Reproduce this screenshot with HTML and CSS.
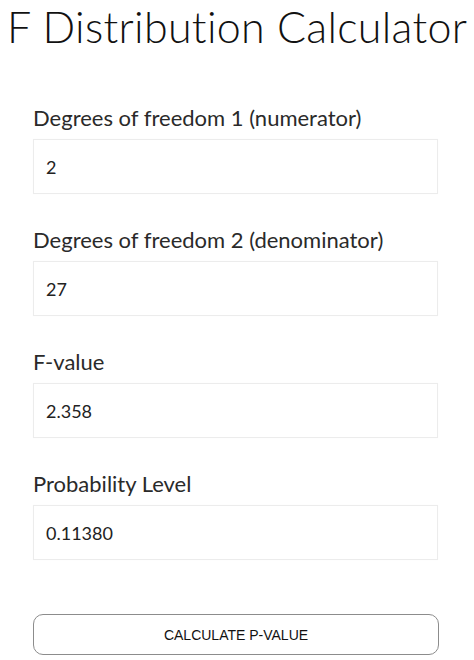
FILE: index.html
```html
<!DOCTYPE html>
<html lang="en">
<head>
<meta charset="utf-8">
<title>F Distribution Calculator</title>
<link rel="stylesheet" href="styles.css">
</head>
<body>
<h1 class="title">F Distribution Calculator</h1>
<form class="calc">
  <div class="field">
    <label class="label" for="df1">Degrees of freedom 1 (numerator)</label>
    <input class="input" id="df1" type="text" value="2">
  </div>
  <div class="field">
    <label class="label" for="df2">Degrees of freedom 2 (denominator)</label>
    <input class="input" id="df2" type="text" value="27">
  </div>
  <div class="field">
    <label class="label" for="fval">F-value</label>
    <input class="input" id="fval" type="text" value="2.358">
  </div>
  <div class="field">
    <label class="label" for="prob">Probability Level</label>
    <input class="input" id="prob" type="text" value="0.11380">
  </div>
  <button class="btn" type="button">CALCULATE P-VALUE</button>
</form>
</body>
</html>
```
FILE: styles.css
```css
html, body {
  margin: 0;
  padding: 0;
  background: #fff;
}
body {
  font-family: Lato, "Open Sans", sans-serif;
  color: #1a1a1a;
  width: 474px;
}
.title {
  margin: 0;
  padding: 1px 0 0 7px;
  height: 51px;
  font-size: 43px;
  line-height: 51px;
  letter-spacing: 0.3px;
  font-weight: 300;
  color: #111;
  white-space: nowrap;
}
.calc {
  display: flex;
  flex-direction: column;
  padding: 52px 36px 0 33px;
}
.field {
  display: flex;
  flex-direction: column;
  margin-bottom: 32px;
}
.label {
  font-size: 22px;
  line-height: 28px;
  color: #2a2a2a;
  margin-bottom: 7px;
}
.input {
  box-sizing: border-box;
  height: 55px;
  width: 405px;
  border: 1px solid #ececec;
  box-shadow: 0 0 1px rgba(0,0,0,0.04);
  padding: 0 12px;
  font-family: Lato, "Open Sans", sans-serif;
  font-size: 18px;
  color: #222;
  background: #fff;
  outline: none;
}
.btn {
  box-sizing: border-box;
  margin-top: 22px;
  width: 406px;
  height: 41px;
  border: 1px solid #8c8c8c;
  border-radius: 10px;
  background: #fff;
  font-family: "Liberation Sans", Arial, sans-serif;
  font-size: 14px;
  color: #111;
  cursor: pointer;
}
```
